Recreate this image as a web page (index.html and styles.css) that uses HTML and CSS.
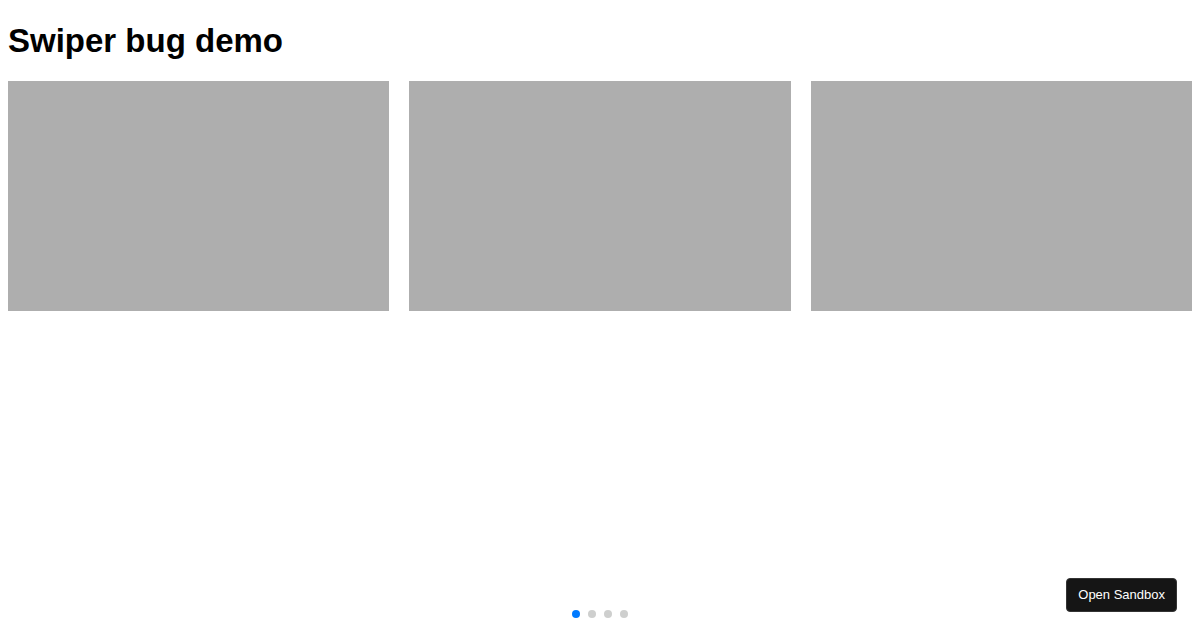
FILE: index.html
```html
<!DOCTYPE html>
<html lang="en">
<head>
  <meta charset="UTF-8">
  <meta name="viewport" content="width=device-width, initial-scale=1">
  <title>Swiper bug demo</title>
  <link rel="stylesheet" href="styles.css">
</head>
<body>
  <h1>Swiper bug demo</h1>

  <div class="swiper">
    <div class="swiper-wrapper">
      <div class="swiper-slide"></div>
      <div class="swiper-slide"></div>
      <div class="swiper-slide"></div>
      <div class="swiper-slide"></div>
      <div class="swiper-slide"></div>
      <div class="swiper-slide"></div>
    </div>
  </div>

  <div class="swiper-pagination">
    <button type="button" class="bullet bullet-active" aria-label="Go to slide 1"></button>
    <button type="button" class="bullet" aria-label="Go to slide 2"></button>
    <button type="button" class="bullet" aria-label="Go to slide 3"></button>
    <button type="button" class="bullet" aria-label="Go to slide 4"></button>
  </div>

  <button type="button" class="open-sandbox">Open Sandbox</button>

  <script src="script.js"></script>
</body>
</html>
```

FILE: styles.css
```css
body {
  margin: 0 8px;
  font-family: "Liberation Sans", Arial, sans-serif;
}

h1 {
  margin: 21px 0;
  font-size: 33px;
  line-height: 39px;
}

.swiper {
  overflow: hidden;
}

.swiper-wrapper {
  display: flex;
  gap: 20px;
  transition: transform 0.3s ease;
}

/* three slides per view */
.swiper-slide {
  flex: 0 0 calc((100% - 40px) / 3);
  height: 230px;
  background: #aeaeae;
}

.swiper-pagination {
  position: fixed;
  right: 0;
  bottom: 12px;
  left: 0;
  display: flex;
  justify-content: center;
  gap: 8px;
}

.bullet {
  width: 8px;
  height: 8px;
  padding: 0;
  border: none;
  border-radius: 50%;
  background: #cecfce;
  cursor: pointer;
}

.bullet-active {
  background: #007aff;
}

.open-sandbox {
  position: fixed;
  right: 23px;
  bottom: 18px;
  padding: 8px 11px;
  border: 1px solid #343434;
  border-radius: 4px;
  background: #151515;
  color: #fff;
  font-family: "Liberation Sans", Arial, sans-serif;
  font-size: 13px;
  line-height: 16px;
  cursor: pointer;
}
```

FILE: script.js
```js
const wrapper = document.querySelector('.swiper-wrapper');
const slides = document.querySelectorAll('.swiper-slide');
const bullets = document.querySelectorAll('.bullet');

const goToSlide = (index) => {
  wrapper.style.transform = `translateX(-${slides[index].offsetLeft - slides[0].offsetLeft}px)`;
  bullets.forEach((bullet, i) => {
    bullet.classList.toggle('bullet-active', i === index);
  });
};

bullets.forEach((bullet, index) => {
  bullet.addEventListener('click', () => goToSlide(index));
});
```
